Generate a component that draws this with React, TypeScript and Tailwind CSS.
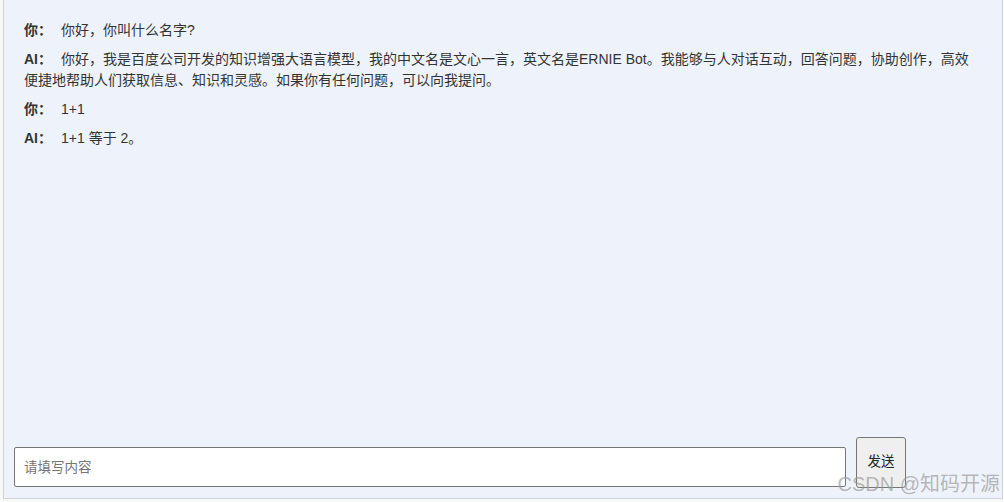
import React, { useState } from 'react';

interface Message {
  role: 'user' | 'ai';
  text: string;
}

const messages: Message[] = [
  { role: 'user', text: '你好，你叫什么名字?' },
  {
    role: 'ai',
    text: '你好，我是百度公司开发的知识增强大语言模型，我的中文名是文心一言，英文名是ERNIE Bot。我能够与人对话互动，回答问题，协助创作，高效便捷地帮助人们获取信息、知识和灵感。如果你有任何问题，可以向我提问。',
  },
  { role: 'user', text: '1+1' },
  { role: 'ai', text: '1+1 等于 2。' },
];

export default function App() {
  const [input, setInput] = useState('');

  return (
    <div
      className="relative w-[1004px] h-[502px] bg-[#f7f8fa] text-[14px] text-[#333]"
      style={{ fontFamily: '"Liberation Sans", Arial, "Noto Sans CJK SC", sans-serif' }}
    >
      <div className="ml-[3px] w-[1000px] h-[499px] flex flex-col bg-[#eef3fb] border-l border-r border-b border-[#cfd3d8]">
        {/* Chat history */}
        <div className="flex-1 flex flex-col gap-[8px] pt-[20px] pl-[20px] pr-[24px]">
          {messages.map((m, i) => (
            <p key={i} className="leading-[21px]">
              <span className="mr-[9px] font-bold">{m.role === 'user' ? '你：' : 'AI：'}</span>
              {m.text}
            </p>
          ))}
        </div>

        {/* Input bar */}
        <div className="flex items-end gap-[10px] px-[10px] pb-[10px]">
          <input
            type="text"
            value={input}
            onChange={(e) => setInput(e.target.value)}
            placeholder="请填写内容"
            className="w-[832px] h-[40px] mb-[1px] px-[9px] bg-white border border-[#767676] rounded-[2px] outline-none text-[13.5px] placeholder:text-[#757575]"
          />
          <button className="w-[50px] h-[51px] bg-[#efefef] border border-[#767676] rounded-[3px] text-[13.5px] text-[#222]">
            发送
          </button>
        </div>
      </div>

      {/* Watermark */}
      <div className="absolute right-[4px] bottom-[6px] text-[20px] leading-[24px] text-[#9a9a9a]/70 pointer-events-none select-none">
        CSDN @知码开源
      </div>
    </div>
  );
}
